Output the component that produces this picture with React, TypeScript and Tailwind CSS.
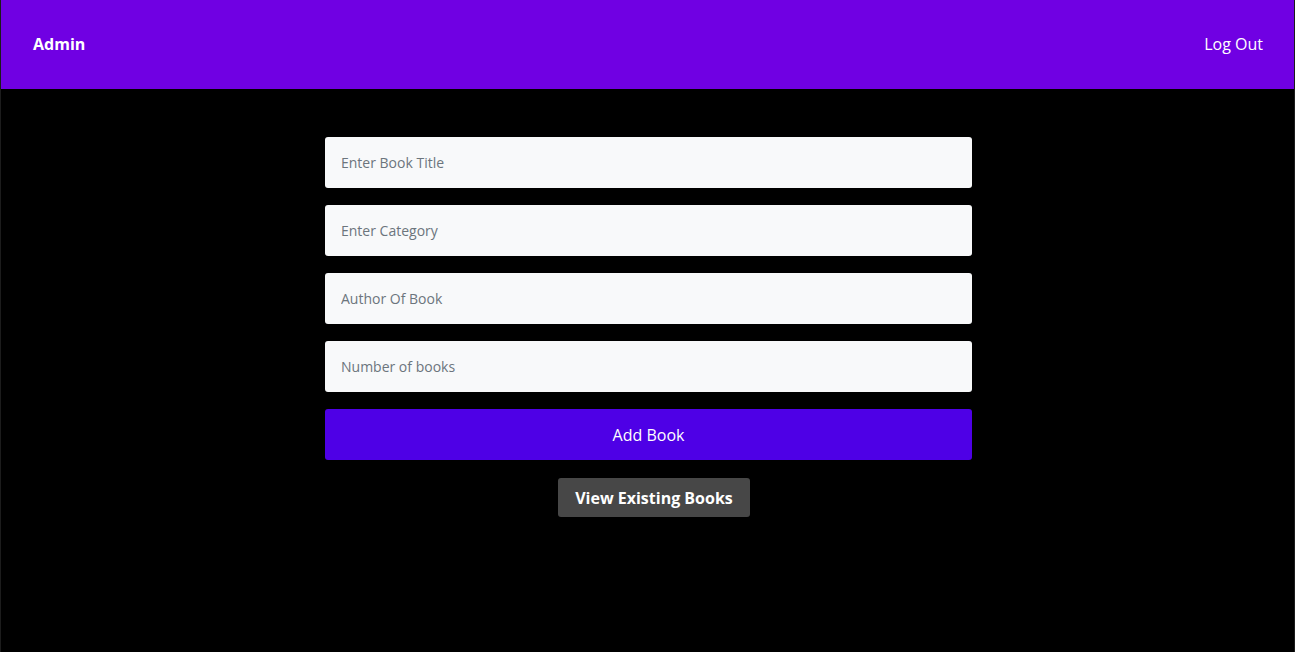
import React from "react";

export default function App() {
  const font = { fontFamily: '"Open Sans", "Liberation Sans", sans-serif' };
  return (
    <div className="min-h-[652px] bg-black border-x border-[#1c1c1c]" style={font}>
      <header className="h-[89px] bg-[#7000e3] flex items-center justify-between pl-8 pr-[31px] pb-[1px]">
        <span className="text-white font-bold text-[16px]">Admin</span>
        <span className="text-white text-[16px]">Log Out</span>
      </header>
      <div className="flex justify-center pl-[2px]">
        <div className="w-[647px] pt-[48px] flex flex-col gap-[17px]">
          {["Enter Book Title", "Enter Category", "Author Of Book", "Number of books"].map((p) => (
            <input
              key={p}
              placeholder={p}
              className="h-[51px] w-full rounded-[3px] bg-[#f8f9fa] px-4 text-[14px] text-[#333] placeholder:text-[#6c757d] outline-none"
              style={font}
            />
          ))}
          <button className="h-[51px] w-full rounded-[3px] bg-[#4e00e6] text-white text-[16px]" style={font}>
            Add Book
          </button>
        </div>
      </div>
      <div className="flex justify-center mt-[18px] pl-[13px]">
        <button className="h-[39px] px-[17px] rounded-[3px] bg-[#474747] text-white font-bold text-[16px]" style={font}>
          View Existing Books
        </button>
      </div>
    </div>
  );
}
